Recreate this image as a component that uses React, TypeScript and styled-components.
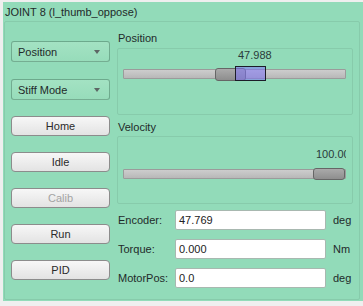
import React from 'react';
import styled, { createGlobalStyle } from 'styled-components';

const GlobalStyle = createGlobalStyle`
  html, body {
    margin: 0;
    padding: 0;
    background: #efefef;
  }
  body {
    font-family: 'Liberation Sans', Arial, sans-serif;
    font-size: 11px;
    color: #2f3436;
  }
`;

const Panel = styled.div`
  width: 360px;
  height: 299px;
  margin: 2px 0 0 3px;
  background: #92dbb9;
  display: flex;
  flex-direction: column;
`;

const Title = styled.div`
  height: 19px;
  padding: 2px 0 0 2px;
  box-sizing: border-box;
  line-height: 16px;
  color: #1f2a2a;
`;

const Frame = styled.div`
  flex: 1;
  margin: 0 0 1px 1px;
  width: 356px;
  box-sizing: border-box;
  border: 1px solid rgba(0, 0, 0, 0.07);
  border-radius: 2px;
  display: flex;
`;

const LeftColumn = styled.div`
  width: 107px;
  box-sizing: border-box;
  padding: 19px 0 0 6px;
  display: flex;
  flex-direction: column;
`;

const Combo = styled.div`
  width: 99px;
  height: 21px;
  box-sizing: border-box;
  margin-bottom: 17px;
  padding: 0 9px 0 6px;
  border: 1px solid rgba(0, 40, 20, 0.28);
  border-radius: 3px;
  background: linear-gradient(#a3e2c3, #97dcba);
  display: flex;
  align-items: center;
  justify-content: space-between;
  color: #1f2a2a;
`;

const Arrow = styled.span`
  width: 0;
  height: 0;
  border-left: 3.5px solid transparent;
  border-right: 3.5px solid transparent;
  border-top: 4px solid #5d6664;
`;

const Button = styled.div<{ $disabled?: boolean }>`
  width: 99px;
  height: 20px;
  box-sizing: border-box;
  margin-bottom: 16px;
  border: 1px solid #8c8c8c;
  border-radius: 4px;
  background: linear-gradient(#f7f7f7, #e3e3e3);
  display: flex;
  align-items: center;
  justify-content: center;
  color: ${p => (p.$disabled ? '#a3a3a3' : '#2a2a2a')};
`;

const FirstButton = styled(Button)`
  margin-top: -1px;
`;

const RightColumn = styled.div`
  flex: 1;
  padding: 10px 0 0 5px;
  display: flex;
  flex-direction: column;
`;

const GroupLabel = styled.div<{ $gap: number }>`
  height: 12px;
  line-height: 12px;
  padding-left: 1px;
  margin-bottom: ${p => p.$gap}px;
  color: #1f2a2a;
`;

const SliderBox = styled.div<{ $height: number; $top: number }>`
  width: 236px;
  height: ${p => p.$height}px;
  box-sizing: border-box;
  border: 1px solid rgba(0, 0, 0, 0.07);
  border-radius: 2px;
  padding: ${p => p.$top}px 0 0 5px;
  margin-bottom: 6px;
  display: flex;
  flex-direction: column;
`;

const ValueRow = styled.div<{ $height: number }>`
  position: relative;
  width: 223px;
  height: ${p => p.$height}px;
  overflow: hidden;
`;

const ValueText = styled.span`
  position: absolute;
  top: 0;
  line-height: 12px;
  white-space: nowrap;
  color: #2a3a3a;
`;

const Groove = styled.div`
  position: relative;
  width: 223px;
  height: 10px;
  box-sizing: border-box;
  border: 1px solid #9b9b9b;
  border-radius: 1px;
  background: linear-gradient(#cdcdcd, #b8b8b8);
`;

const Handle = styled.div<{ $width: number; $height: number }>`
  position: absolute;
  top: ${p => (10 - p.$height) / 2 - 1}px;
  width: ${p => p.$width}px;
  height: ${p => p.$height}px;
  box-sizing: border-box;
  border: 1px solid #666;
  border-radius: 3px;
  background: linear-gradient(#aaaaaa, #8e8e8e);
`;

const Target = styled.div`
  position: absolute;
  top: -4px;
  width: 31px;
  height: 15px;
  box-sizing: border-box;
  border: 1px solid #1c1c28;
  background: rgba(125, 115, 245, 0.55);
`;

const Readouts = styled.div`
  display: grid;
  grid-template-columns: 50px 151px auto;
  column-gap: 7px;
  row-gap: 9px;
  align-items: center;
  padding-left: 1px;
`;

const ReadLabel = styled.div`
  color: #1f2a2a;
  white-space: nowrap;
`;

const Field = styled.div`
  height: 20px;
  box-sizing: border-box;
  border: 1px solid #a8b8b0;
  border-radius: 2px;
  background: #fff;
  padding-left: 3px;
  line-height: 18px;
  color: #222;
`;

const Unit = styled.div`
  color: #1f2a2a;
`;

export default function App() {
  const readouts = [
    { label: 'Encoder:', value: '47.769', unit: 'deg' },
    { label: 'Torque:', value: '0.000', unit: 'Nm' },
    { label: 'MotorPos:', value: '0.0', unit: 'deg' },
  ];

  return (
    <>
      <GlobalStyle />
      <Panel>
        <Title>JOINT 8 (l_thumb_oppose)</Title>
        <Frame>
          <LeftColumn>
            <Combo>
              Position
              <Arrow />
            </Combo>
            <Combo>
              Stiff Mode
              <Arrow />
            </Combo>
            <FirstButton>Home</FirstButton>
            <Button>Idle</Button>
            <Button $disabled>Calib</Button>
            <Button>Run</Button>
            <Button>PID</Button>
          </LeftColumn>
          <RightColumn>
            <GroupLabel $gap={4}>Position</GroupLabel>
            <SliderBox $height={67} $top={0}>
              <ValueRow $height={20}>
                <ValueText style={{ left: 115 }}>47.988</ValueText>
              </ValueRow>
              <Groove>
                <Handle $width={31} $height={13} style={{ left: 91 }} />
                <Target style={{ left: 111 }} />
              </Groove>
            </SliderBox>
            <GroupLabel $gap={3}>Velocity</GroupLabel>
            <SliderBox $height={68} $top={11}>
              <ValueRow $height={21}>
                <ValueText style={{ left: 193 }}>100.00</ValueText>
              </ValueRow>
              <Groove>
                <Handle $width={32} $height={12} style={{ left: 189 }} />
              </Groove>
            </SliderBox>
            <Readouts>
              {readouts.map(r => (
                <React.Fragment key={r.label}>
                  <ReadLabel>{r.label}</ReadLabel>
                  <Field>{r.value}</Field>
                  <Unit>{r.unit}</Unit>
                </React.Fragment>
              ))}
            </Readouts>
          </RightColumn>
        </Frame>
      </Panel>
    </>
  );
}
